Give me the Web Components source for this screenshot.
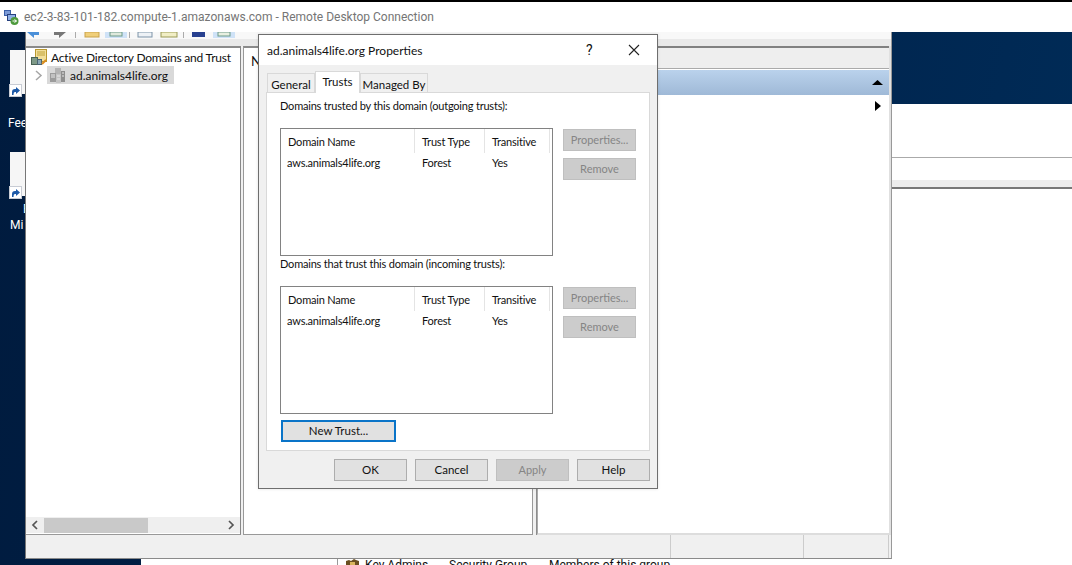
<!DOCTYPE html>
<html>
<head>
<meta charset="utf-8">
<title>ad.animals4life.org Properties</title>
<style>
  html, body { margin: 0; height: 100%; overflow: hidden; background: #fff; }
  body { display: flex; flex-direction: column; width: 1072px; height: 565px; font-family: "Open Sans", "Liberation Sans", sans-serif; }
</style>
</head>
<body>
<rdp-titlebar>ec2-3-83-101-182.compute-1.amazonaws.com - Remote Desktop Connection</rdp-titlebar>
<remote-desktop>
  <desk-icon style="left:0;top:18px" label="Fee"></desk-icon>
  <desk-icon style="left:0;top:120px" label="E" second="Mi"></desk-icon>
  <back-window></back-window>
  <mmc-window></mmc-window>
  <prop-dialog></prop-dialog>
</remote-desktop>

<script>
const UI_FONT = `"Lato", "Liberation Sans", sans-serif`

class RdpTitlebar extends HTMLElement {
  constructor() {
    super()
    this.attachShadow({ mode: 'open' }).innerHTML = /*html*/`
      <style>
        :host { display: flex; align-items: center; flex: none; height: 30px; border-top: 2px solid #000; background: #fff; box-sizing: content-box; padding-left: 4px; gap: 5px; }
        svg { flex: none; margin-top: 1px; }
        span { font: 12px "Roboto", sans-serif; color: #757575; white-space: nowrap; }
      </style>
      <svg width="15" height="16" viewBox="0 0 15 16">
        <rect x="0" y="0" width="7" height="6" fill="#3a5fa8"/>
        <rect x="1" y="1" width="5" height="4" fill="#7c9ad6"/>
        <rect x="3" y="4" width="9" height="7" fill="#27407e"/>
        <rect x="4" y="5" width="7" height="5" fill="#8fb0e6"/>
        <circle cx="10.5" cy="11" r="4" fill="#4d9a3c"/>
        <path d="M8.5 11h4M10.5 9.5l2 1.5-2 1.5" stroke="#fff" stroke-width="1" fill="none"/>
      </svg>
      <span><slot></slot></span>`
  }
}

class RemoteDesktop extends HTMLElement {
  constructor() {
    super()
    this.attachShadow({ mode: 'open' }).innerHTML = /*html*/`
      <style>
        :host { display: block; position: relative; flex: 1; overflow: hidden;
          background: linear-gradient(100deg, #001b3e 0%, #00234c 60%, #002c58 100%); }
        .below { position: absolute; left: 141px; right: 0; top: 527px; bottom: 0; background: #fff; }
        .row { position: absolute; left: 337px; top: 527px; height: 10px; width: 340px; border-left: 1px solid #999; padding-left: 8px;
          font: 12px/13px "Roboto", sans-serif; color: #111; white-space: nowrap; display: flex; }
        .row svg { margin-right: 6px; flex: none; }
        .row span { flex: none; }
      </style>
      <div class="below"></div>
      <div class="row">
        <svg width="13" height="6" viewBox="0 0 13 6"><path d="M0 2l3-1 2 1 3-2 2 1 3 1v4H0z" fill="#6a4e20"/><path d="M4 3h5v3H4z" fill="#d8b45c"/></svg>
        <span style="width:84px">Key Admins</span><span style="width:100px">Security Group</span><span>Members of this group</span>
      </div>
      <slot></slot>`
  }
}

class DeskIcon extends HTMLElement {
  constructor() {
    super()
    const label = this.getAttribute('label') || ''
    const second = this.getAttribute('second')
    this.attachShadow({ mode: 'open' }).innerHTML = /*html*/`
      <style>
        :host { display: block; position: absolute; width: 25px; height: 96px; overflow: hidden; color: #fff; font: 12px/16px "Roboto", sans-serif; }
        .box { position: absolute; left: 10px; top: 0; width: 16px; height: 44px; background: #f6f6f6; }
        svg { position: absolute; left: 9px; top: 34px; }
        .t { position: absolute; left: 8px; top: 65px; white-space: nowrap; }
        .t.two { left: 23px; top: 49px; }
        .t.three { left: 10px; top: 65px; }
      </style>
      <div class="box"></div>
      <svg width="13" height="13" viewBox="0 0 13 13">
        <rect x=".5" y=".5" width="12" height="12" fill="#fff" stroke="#c8ccd4"/>
        <path d="M3 11V8c0-2 1-3 3-3h1V3l4 3.5L7 10V8H6c-1 0-1.500 1-1.500 3z" fill="#1d5aa8"/>
      </svg>
      ${second
        ? `<div class="t two">${label}</div><div class="t three">${second}</div>`
        : `<div class="t">${label}</div>`}`
  }
}

class BackWindow extends HTMLElement {
  constructor() {
    super()
    this.attachShadow({ mode: 'open' }).innerHTML = /*html*/`
      <style>
        :host { display: flex; flex-direction: column; position: absolute; left: 891px; right: 0; top: 72px; bottom: 0; background: #fff; }
        .a { height: 53px; flex: none; border-bottom: 1px solid #aaa; }
        .b { height: 22px; flex: none; }
        .c { height: 7px; flex: none; background: #ececec; border-bottom: 2px solid #777; }
      </style>
      <div class="a"></div><div class="b"></div><div class="c"></div>`
  }
}

class MmcWindow extends HTMLElement {
  constructor() {
    super()
    this.attachShadow({ mode: 'open' }).innerHTML = /*html*/`
      <style>
        :host { display: flex; flex-direction: column; position: absolute; left: 25px; top: 0; width: 867px; height: 527px; box-sizing: border-box;
          background: #f0f0f0; border-left: 1px solid #777; border-right: 1px solid #999; border-bottom: 1px solid #8a8a8a; font: 12px ${UI_FONT}; color: #111; }
        .tools { flex: none; height: 7px; background: #f8f8f8; position: relative; overflow: hidden; display: flex; }
        .tools svg { display: block; }
        .band { flex: none; height: 7px; background: #e9e9e9; }
        .panes { flex: 1; display: flex; min-height: 0; background: #f0f0f0; }
        .tree { width: 215px; flex: none; box-sizing: border-box; background: #fff; border-top: 2px solid #8a8a8a; border-right: 1px solid #888; border-bottom: 1px solid #999; display: flex; flex-direction: column; overflow: hidden; }
        .nodes { flex: 1; padding: 0 0 0 5px; }
        .node { display: flex; align-items: center; height: 18px; white-space: nowrap; }
        .node svg { flex: none; }
        .node.root { gap: 3px; letter-spacing: -.2px; }
        .node.child { margin-left: 3px; }
        .chev { width: 9px; }
        .sel { display: flex; align-items: center; background: #d9d9d9; height: 18px; width: 127px; box-sizing: border-box; gap: 5px; padding-left: 3px; margin-left: 4px; }
        .hscroll { height: 16px; flex: none; background: #efefef; display: flex; align-items: center; margin-bottom: 1px; }
        .hscroll .btn { width: 18px; flex: none; display: flex; justify-content: center; }
        .hscroll .thumb { width: 104px; height: 15px; background: #c9c9c9; flex: none; }
        .hscroll .rest { flex: 1; }
        .center { width: 290px; flex: none; box-sizing: border-box; margin-left: 2px; background: #fff; border: 1px solid #999; border-top: 2px solid #8a8a8a; padding: 5px 0 0 7px; overflow: hidden; font-size: 13px; }
        .split { width: 3px; flex: none; border-right: 1px solid #8c8c8c; }
        .actions { flex: 1; background: #fff; border-left: 1px solid #aaa; border-right: 2px solid #e0e0e0; border-bottom: 2px solid #ddd; display: flex; flex-direction: column; }
        .actions .top { height: 20px; flex: none; background: #eee; border-top: 2px solid #808080; border-bottom: 1px solid #aaa; }
        .actions .head { height: 25px; flex: none; margin-top: 1px; background: linear-gradient(#bad2ec, #9fb9d7); display: flex; align-items: center; justify-content: flex-end; padding-right: 6px; }
        .actions .row { height: 22px; display: flex; align-items: center; justify-content: flex-end; padding-right: 8px; }
        .status { flex: none; height: 23px; display: flex; }
        .status div { box-sizing: border-box; border-right: 1px solid #ccc; }
      </style>
      <div class="tools">
        <svg width="220" height="7" viewBox="0 0 220 7">
          <path d="M7 -2L8 0H13V3H8V6L1 0z" fill="#4a8fd8"/>
          <path d="M34 -2L33 0H28V3H33V6L40 0z" fill="#777"/>
          <rect x="49" y="0" width="1" height="6" fill="#aaa"/>
          <rect x="59" y="0" width="14" height="5" fill="#f0cf7a" stroke="#c9a24a"/>
          <rect x="79" y="0" width="22" height="6" fill="#cfe2f7"/>
          <rect x="84" y="0" width="12" height="4" fill="#dfe9dc" stroke="#6d9a8a"/>
          <rect x="103" y="0" width="1" height="6" fill="#aaa"/>
          <rect x="112" y="0" width="14" height="5" fill="#eef2f6" stroke="#7d93a8"/>
          <rect x="135" y="0" width="16" height="5" fill="#f1eec5" stroke="#9a9a55"/>
          <rect x="157" y="0" width="1" height="6" fill="#aaa"/>
          <rect x="166" y="0" width="13" height="5" fill="#27408f"/>
          <rect x="187" y="0" width="22" height="6" fill="#cfe2f7"/>
          <rect x="192" y="0" width="12" height="4" fill="#e8efe0" stroke="#6d9a8a"/>
        </svg>
      </div>
      <div class="band"></div>
      <div class="panes">
        <div class="tree">
          <div class="nodes">
            <div class="node root">
              <svg width="17" height="17" viewBox="0 0 17 17">
                <rect x="4.500" y=".5" width="11" height="12" fill="#f2df9a" stroke="#b9982f"/>
                <rect x="6" y="2" width="8" height="5" fill="#d9c16a"/>
                <rect x=".5" y="8.500" width="6" height="7" fill="#7f9a88" stroke="#4a6355"/>
                <rect x="6.500" y="10.500" width="4" height="5" fill="#8aa7b5" stroke="#4b6473"/>
                <path d="M11 15l4-4" stroke="#d98b1f" stroke-width="2"/>
              </svg>
              <span>Active Directory Domains and Trust</span>
            </div>
            <div class="node child">
              <svg class="chev" width="9" height="11" viewBox="0 0 9 11"><path d="M2 1l5 4.500-5 4.500" fill="none" stroke="#a6a6a6" stroke-width="1.500"/></svg>
              <div class="sel">
                <svg width="15" height="15" viewBox="0 0 15 15">
                  <rect x="5" y="0" width="6" height="6" fill="#b4b4b4"/>
                  <rect x="0" y="5" width="6" height="9" fill="#9c9c9c"/>
                  <rect x="6" y="6" width="5" height="9" fill="#c4c4c4"/>
                  <rect x="11" y="3" width="4" height="11" fill="#8e8e8e"/>
                  <path d="M1 7h4M1 9h4M7 8h3M7 11h3M12 5h2M12 8h2" stroke="#e8e8e8"/>
                </svg>
                <span>ad.animals4life.org</span>
              </div>
            </div>
          </div>
          <div class="hscroll">
            <div class="btn"><svg width="8" height="10" viewBox="0 0 8 10"><path d="M6 1L2 5l4 4" fill="none" stroke="#555" stroke-width="1.700"/></svg></div>
            <div class="thumb"></div>
            <div class="rest"></div>
            <div class="btn"><svg width="8" height="10" viewBox="0 0 8 10"><path d="M2 1l4 4-4 4" fill="none" stroke="#555" stroke-width="1.700"/></svg></div>
          </div>
        </div>
        <div class="center">N</div>
        <div class="split"></div>
        <div class="actions">
          <div class="top"></div>
          <div class="head"><svg width="11" height="5" viewBox="0 0 11 5"><path d="M5.500 0L11 5H0z" fill="#000"/></svg></div>
          <div class="row"><svg width="6" height="10" viewBox="0 0 6 10"><path d="M0 0l6 5-6 5z" fill="#000"/></svg></div>
        </div>
      </div>
      <div class="status">
        <div style="width:645px"></div><div style="width:133px"></div><div style="width:85px"></div>
      </div>`
  }
}

class DlgButton extends HTMLElement {
  constructor() {
    super()
    this.attachShadow({ mode: 'open' }).innerHTML = /*html*/`
      <style>
        :host { display: flex; align-items: center; justify-content: center; box-sizing: border-box; width: 73px; height: 22px; flex: none; padding-bottom: 1px;
          background: #e1e1e1; border: 1px solid #adadad; color: #111; font: 11.500px ${UI_FONT}; white-space: nowrap; }
        :host([disabled]) { background: #ccc; border-color: #bfbfbf; color: #858585; font-size: 11px; }
        :host([focused]) { width: 115px; border: 2px solid #0a74c8; }
      </style>
      <slot></slot>`
  }
}

class TrustList extends HTMLElement {
  constructor() {
    super()
    this.attachShadow({ mode: 'open' }).innerHTML = /*html*/`
      <style>
        :host { display: block; font: 11px ${UI_FONT}; color: #111; letter-spacing: -.2px; }
        .label { height: 29px; line-height: 14px; white-space: nowrap; }
        .wrap { display: flex; gap: 10px; align-items: flex-start; }
        .list { width: 273px; height: 128px; box-sizing: border-box; border: 1px solid #828282; background: #fff; flex: none; }
        .head, .cells { display: grid; grid-template-columns: 134px 70px 65px; }
        .head { height: 24px; }
        .head div { display: flex; align-items: center; padding-left: 7px; border-right: 1px solid #e4e4e4; }
        .cells { height: 18px; align-items: center; }
        .cells div { padding-left: 6px; }
        .cells div + div { padding-left: 7px; }
        .side { display: flex; flex-direction: column; gap: 7px; padding-top: 1px; letter-spacing: 0; }
      </style>
      <div class="label"><slot></slot></div>
      <div class="wrap">
        <div class="list">
          <div class="head"><div>Domain Name</div><div>Trust Type</div><div>Transitive</div></div>
          <div class="cells"><div>aws.animals4life.org</div><div>Forest</div><div>Yes</div></div>
        </div>
        <div class="side">
          <dlg-button disabled>Properties...</dlg-button>
          <dlg-button disabled>Remove</dlg-button>
        </div>
      </div>`
  }
}

class PropDialog extends HTMLElement {
  constructor() {
    super()
    this.attachShadow({ mode: 'open' }).innerHTML = /*html*/`
      <style>
        :host { display: flex; flex-direction: column; position: absolute; left: 258px; top: 2px; width: 400px; height: 455px; box-sizing: border-box;
          background: #f0f0f0; border: 1px solid #6e6e6e; color: #111; font: 11px ${UI_FONT}; box-shadow: 0 0 3px rgba(0,0,0,.12); }
        .title { flex: none; height: 30px; background: #fff; display: flex; align-items: center; padding-left: 8px; font-size: 12px; }
        .title span { flex: 1; }
        .title b { font-weight: 400; font-size: 14px; width: 42px; font-family: "Roboto", sans-serif; }
        .title svg { margin-right: 17px; }
        .tabs { flex: none; display: flex; height: 27px; padding: 5px 0 0 8px; box-sizing: border-box; align-items: flex-end; position: relative; z-index: 1; }
        .tab { height: 19px; box-sizing: border-box; background: #f0f0f0; border: 1px solid #d9d9d9; border-bottom: 0; display: flex; align-items: center; justify-content: center; white-space: nowrap; padding-top: 2px; font-size: 11.500px; }
        .tab.on { height: 22px; background: #fff; margin-bottom: -1px; padding: 0 0 3px; }
        .panel { flex: none; margin-left: 7px; width: 384px; height: 359px; box-sizing: border-box; background: #fff; border: 1px solid #d9d9d9; padding: 6px 0 0 13px; }
        trust-list + trust-list { margin-top: 1px; }
        .new { margin: 6px 0 0 1px; }
        .foot { flex: none; display: flex; gap: 8px; justify-content: flex-end; padding: 8px 7px 0 0; }
      </style>
      <div class="title">
        <span>ad.animals4life.org Properties</span>
        <b>?</b>
        <svg width="12" height="12" viewBox="0 0 12 12"><path d="M1 1l10 10M11 1L1 11" stroke="#222" stroke-width="1.100" fill="none"/></svg>
      </div>
      <div class="tabs">
        <div class="tab" style="width:48px">General</div>
        <div class="tab on" style="width:45px">Trusts</div>
        <div class="tab" style="width:68px">Managed By</div>
      </div>
      <div class="panel">
        <trust-list>Domains trusted by this domain (outgoing trusts):</trust-list>
        <trust-list>Domains that trust this domain (incoming trusts):</trust-list>
        <div class="new"><dlg-button focused>New Trust...</dlg-button></div>
      </div>
      <div class="foot">
        <dlg-button>OK</dlg-button>
        <dlg-button>Cancel</dlg-button>
        <dlg-button disabled>Apply</dlg-button>
        <dlg-button>Help</dlg-button>
      </div>`
  }
}

customElements.define('rdp-titlebar', RdpTitlebar)
customElements.define('remote-desktop', RemoteDesktop)
customElements.define('desk-icon', DeskIcon)
customElements.define('back-window', BackWindow)
customElements.define('mmc-window', MmcWindow)
customElements.define('dlg-button', DlgButton)
customElements.define('trust-list', TrustList)
customElements.define('prop-dialog', PropDialog)
</script>
</body>
</html>
